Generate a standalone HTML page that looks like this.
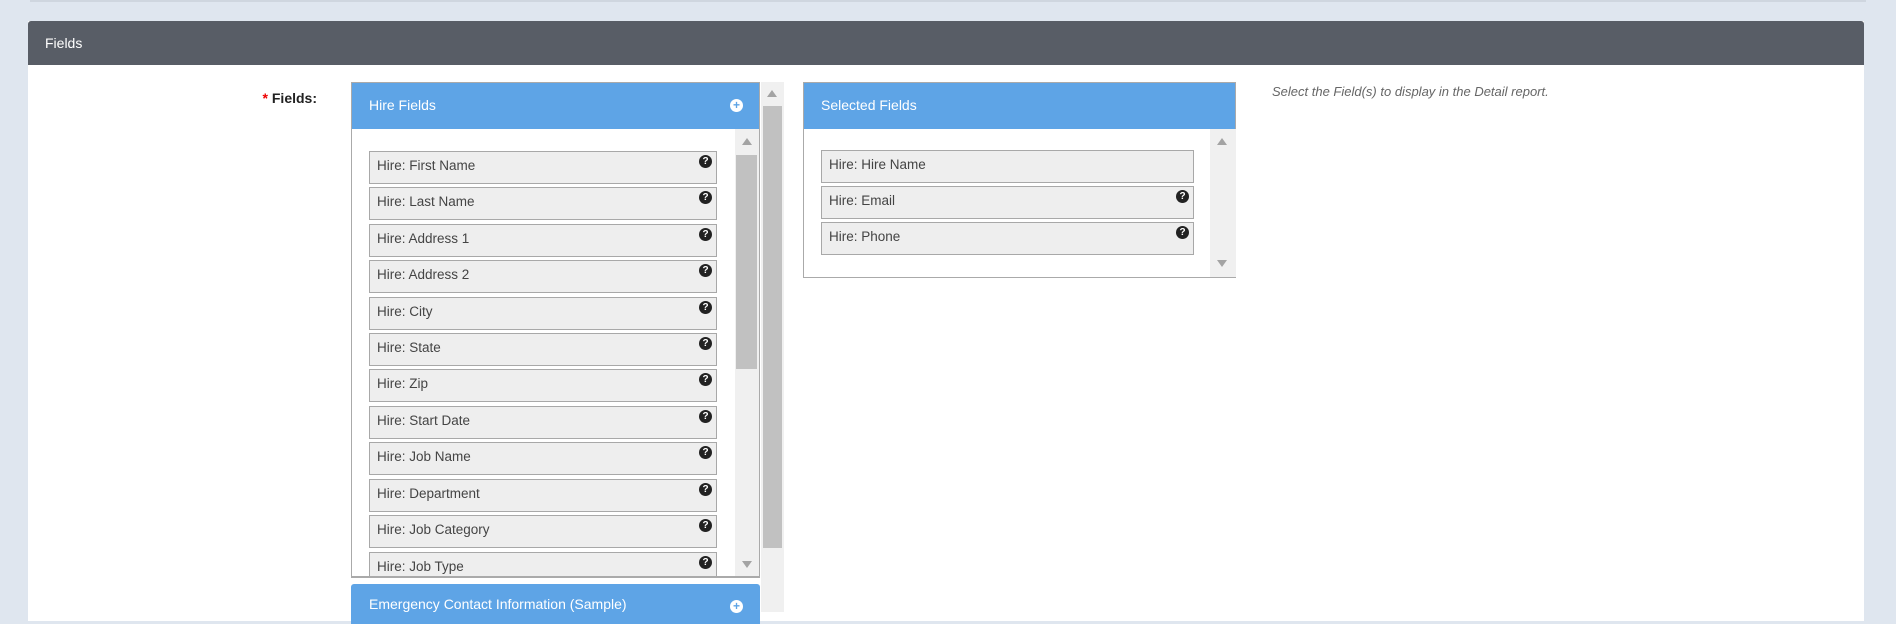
<!DOCTYPE html>
<html><head><meta charset="utf-8"><style>
*{box-sizing:border-box;margin:0;padding:0}
body{width:1896px;height:609px;overflow:hidden;background:#dfe6ef;font-family:"Liberation Sans",sans-serif;position:relative}
.abs{position:absolute}
.topbar{left:30px;right:30px;top:0;height:2px;background:#cfd6df}
.panel{left:28px;top:21px;width:1836px;height:600px;background:#fff}
.ph{left:28px;top:21px;width:1836px;height:44px;background:#585d66;color:#fff;font-size:14px;line-height:44px;padding-left:17px;border-radius:3px 3px 0 0}
.lbl{left:200px;width:117px;top:90px;text-align:right;font-size:14px;font-weight:bold;color:#222}
.lbl span{color:#e00}
.box{border:1px solid #aaa;background:#fff}
.bh{background:#5ea4e6;color:#fff;font-size:14px;height:46px;line-height:44px;padding-left:17px}
.item{position:absolute;height:33px;border:1px solid #a8a8a8;background:#eee;font-size:13.5px;color:#444;line-height:27px;padding-left:7px}
.q{position:absolute;right:4px;top:3px;width:13px;height:13px;border-radius:50%;background:#222;color:#fff;font-size:10px;line-height:13px;text-align:center;font-weight:bold}
.plus{position:absolute;width:13px;height:13px;border-radius:50%;background:#fff;color:#5ea4e6;font-size:12px;line-height:13px;text-align:center;font-weight:bold}
.sb{background:#f0f0f0}
.th{background:#c1c1c1}
.up,.dn{position:absolute;width:0;height:0;border-left:5px solid transparent;border-right:5px solid transparent}
.up{border-bottom:7px solid #a3a3a3}
.dn{border-top:7px solid #a3a3a3}
</style></head><body>
<div class="abs topbar"></div>
<div class="abs panel"></div>
<div class="abs ph">Fields</div>
<div class="abs lbl"><span>*</span> Fields:</div>

<div class="abs sb" style="left:761px;top:82px;width:23px;height:530px"></div>
<div class="abs th" style="left:763px;top:106px;width:19px;height:442px"></div>
<div class="up" style="left:767px;top:90px"></div>

<div class="abs box" style="left:351px;top:82px;width:409px;height:496px">
 <div class="bh">Hire Fields</div>
</div>
<div class="plus" style="left:730px;top:99px">+</div>
<div class="abs sb" style="left:735px;top:129px;width:24px;height:448px"></div>
<div class="abs th" style="left:736px;top:155px;width:21px;height:214px"></div>
<div class="up" style="left:742px;top:138px"></div>
<div class="dn" style="left:742px;top:561px"></div>
<div class="item" style="left:369px;top:151px;width:348px">Hire: First Name<span class="q">?</span></div>
<div class="item" style="left:369px;top:187px;width:348px">Hire: Last Name<span class="q">?</span></div>
<div class="item" style="left:369px;top:224px;width:348px">Hire: Address 1<span class="q">?</span></div>
<div class="item" style="left:369px;top:260px;width:348px">Hire: Address 2<span class="q">?</span></div>
<div class="item" style="left:369px;top:297px;width:348px">Hire: City<span class="q">?</span></div>
<div class="item" style="left:369px;top:333px;width:348px">Hire: State<span class="q">?</span></div>
<div class="item" style="left:369px;top:369px;width:348px">Hire: Zip<span class="q">?</span></div>
<div class="item" style="left:369px;top:406px;width:348px">Hire: Start Date<span class="q">?</span></div>
<div class="item" style="left:369px;top:442px;width:348px">Hire: Job Name<span class="q">?</span></div>
<div class="item" style="left:369px;top:479px;width:348px">Hire: Department<span class="q">?</span></div>
<div class="item" style="left:369px;top:515px;width:348px">Hire: Job Category<span class="q">?</span></div>
<div class="item" style="left:369px;top:552px;width:348px;height:25px">Hire: Job Type<span class="q">?</span></div>
<div class="abs" style="left:351px;top:576px;width:409px;height:1px;background:#aaa"></div>

<div class="abs" style="left:351px;top:584px;width:409px;height:40px;background:#5ea4e6;border-radius:3px 3px 0 0;color:#fff;font-size:14px;padding:12px 0 0 18px">Emergency Contact Information (Sample)</div>
<div class="plus" style="left:730px;top:600px">+</div>

<div class="abs box" style="left:803px;top:82px;width:433px;height:196px;border-bottom-color:#aaa">
 <div class="bh">Selected Fields</div>
</div>
<div class="abs sb" style="left:1210px;top:129px;width:25px;height:148px"></div>
<div class="abs" style="left:1235px;top:129px;width:1px;height:148px;background:#f0f0f0"></div>
<div class="up" style="left:1217px;top:138px"></div>
<div class="dn" style="left:1217px;top:260px"></div>
<div class="item" style="left:821px;top:150px;width:373px">Hire: Hire Name</div>
<div class="item" style="left:821px;top:186px;width:373px">Hire: Email<span class="q">?</span></div>
<div class="item" style="left:821px;top:222px;width:373px">Hire: Phone<span class="q">?</span></div>

<div class="abs" style="left:1272px;top:84px;font-size:13px;font-style:italic;color:#666">Select the Field(s) to display in the Detail report.</div>
</body></html>
